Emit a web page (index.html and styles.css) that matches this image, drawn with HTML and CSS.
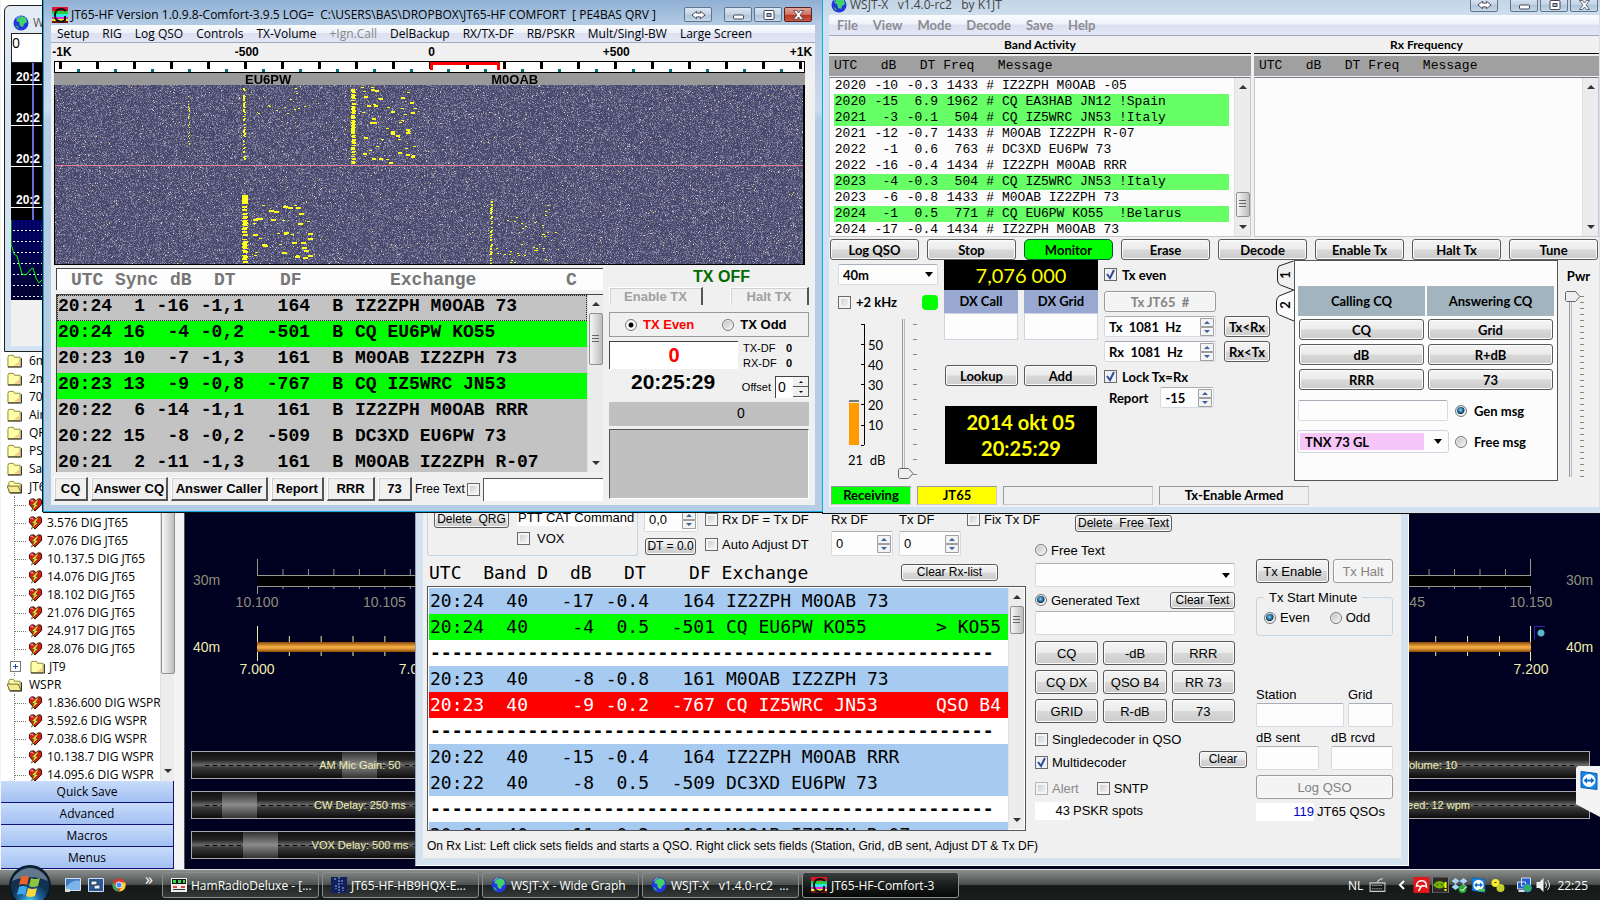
FILE: index.html
```html
<!DOCTYPE html>
<html lang="en">
<head>
    <meta charset="UTF-8">
    <meta name="viewport" content="width=device-width, initial-scale=1.0">
    <title>JT65-HF Comfort</title>
    <link rel="stylesheet" href="styles.css">
</head>
<body>
<svg class="defs" width="0" height="0">
    <symbol id="folder" viewBox="0 0 16 14">
        <path d="M1 3l1-2h5l1 2h6v10H1z" fill="#ffffa8" stroke="#8a8430"/>
        <path d="M14 7v5H7z" fill="#f5c98e"/>
        <path d="M1 13.500h14.500V4" fill="none" stroke="#222"/>
    </symbol>
    <symbol id="folder-open" viewBox="0 0 16 14">
        <path d="M2 12V2l1-1h4l1 2h6v9z" fill="#ffffa8" stroke="#8a8430"/>
        <path d="M0 6h12l3 7H3z" fill="#f4eb93" stroke="#6d6820"/>
        <path d="M3 13.500h12.500V4" fill="none" stroke="#222"/>
    </symbol>
    <symbol id="heart" viewBox="0 0 15 15">
        <path d="M7 14L1 7V3l2-2h3l2 2 2-2h3l1 2v4z" fill="#e31818" stroke="#200"/>
        <path d="M2 3l2-1 1 2" stroke="#fbb" fill="none"/>
        <path d="M9 2L3 8h3l-3 6 8-7H8l3-5z" fill="#e8d43c" stroke="#4b4300" stroke-width=".7"/>
    </symbol>
    <symbol id="globe" viewBox="0 0 16 16">
        <circle cx="8" cy="8" r="7.500" fill="#2334e0"/>
        <path d="M5 3l4-2 4 2 1 4-3 2-1 3-3-1-1-4-3-1z" fill="#3fd36a"/>
        <path d="M2 10l3 1 1 3-2-1z" fill="#2fae52"/>
        <path d="M3 4a7 7 0 0 1 4-3" stroke="#9bb8ff" fill="none"/>
    </symbol>
    <symbol id="comfort" viewBox="0 0 16 16">
        <path d="M0 0h16v4H0z" fill="#e3122a"/>
        <path d="M0 4h16v3H0z" fill="#27d03c"/>
        <path d="M0 7h16v3H0z" fill="#2fe6ef"/>
        <path d="M0 10h16v2H0z" fill="#f02bd7"/>
        <path d="M0 12h16v2H0z" fill="#f4e92c"/>
        <path d="M0 14h16v2H0z" fill="#7b1010"/>
        <path d="M14 4c-3-3-11-3-11 4s7 8 10 5V9" fill="none" stroke="#111" stroke-width="2"/>
    </symbol>
    <symbol id="teamviewer" viewBox="0 0 18 20">
        <path d="M1 1l16 2v16L1 17z" fill="#1587e8" stroke="#0a5cb0"/>
        <circle cx="9" cy="10" r="6.500" fill="#fff"/>
        <path d="M3.500 10l3.500-3v2h4V7l3.500 3-3.500 3v-2H7v2z" fill="#0d6ccb"/>
    </symbol>
    <symbol id="arrows" viewBox="0 0 16 10">
        <path d="M1 5l5-4v2h4V1l5 4-5 4V7H6v2z" fill="#fff" stroke="#445"/>
    </symbol>
    <symbol id="min" viewBox="0 0 12 10"><rect x="1" y="5" width="10" height="4" rx="1" fill="#fff" stroke="#445"/></symbol>
    <symbol id="max" viewBox="0 0 12 10">
        <rect x="1.500" y=".5" width="10" height="9" rx="1" fill="#fff" stroke="#445"/><rect x="4.500" y="3.500" width="4" height="3" fill="#9db4d0" stroke="#445"/>
    </symbol>
    <symbol id="close" viewBox="0 0 12 10">
        <path d="M1 .5h3L6 3l2-2.500h3L7.500 5 11 9.500H8L6 7 4 9.500H1L4.500 5z" fill="#fff" stroke="#445" stroke-width=".8"/>
    </symbol>
</svg>

<div class="desktop">

    <!-- Ham Radio Deluxe, behind everything -->
    <main class="hrd">
        <aside class="side">
            <ul class="tree">
                <li><svg><use href="#folder"/></svg>6m</li>
                <li><svg><use href="#folder"/></svg>2m</li>
                <li><svg><use href="#folder"/></svg>70</li>
                <li><svg><use href="#folder"/></svg>Air</li>
                <li><svg><use href="#folder"/></svg>QRP</li>
                <li><svg><use href="#folder"/></svg>PSK</li>
                <li><svg><use href="#folder"/></svg>Sat</li>
                <li><svg><use href="#folder-open"/></svg>JT65
                    <ul>
                        <li><svg><use href="#heart"/></svg>1.838 DIG JT65</li>
                        <li><svg><use href="#heart"/></svg>3.576 DIG JT65</li>
                        <li><svg><use href="#heart"/></svg>7.076 DIG JT65</li>
                        <li><svg><use href="#heart"/></svg>10.137.5 DIG JT65</li>
                        <li><svg><use href="#heart"/></svg>14.076 DIG JT65</li>
                        <li><svg><use href="#heart"/></svg>18.102 DIG JT65</li>
                        <li><svg><use href="#heart"/></svg>21.076 DIG JT65</li>
                        <li><svg><use href="#heart"/></svg>24.917 DIG JT65</li>
                        <li><svg><use href="#heart"/></svg>28.076 DIG JT65</li>
                        <li class="plus"><svg><use href="#folder"/></svg>JT9</li>
                    </ul>
                </li>
                <li><svg><use href="#folder-open"/></svg>WSPR
                    <ul>
                        <li><svg><use href="#heart"/></svg>1.836.600 DIG WSPR</li>
                        <li><svg><use href="#heart"/></svg>3.592.6 DIG WSPR</li>
                        <li><svg><use href="#heart"/></svg>7.038.6 DIG WSPR</li>
                        <li><svg><use href="#heart"/></svg>10.138.7 DIG WSPR</li>
                        <li><svg><use href="#heart"/></svg>14.095.6 DIG WSPR</li>
                    </ul>
                </li>
            </ul>
            <div class="sbar side-bar"><i class="thumb"></i><i class="dn"></i></div>
            <div class="side-btns">
                <button>Quick Save</button>
                <button>Advanced</button>
                <button>Macros</button>
                <button>Menus</button>
            </div>
        </aside>
        <section class="radio">
            <div class="band b30">
                <b>30m</b>
                <div class="dial">
                    <div class="ticks"></div>
                    <div class="marks"><span>10.100</span><span>10.105</span><span>10.110</span><span>10.115</span><span>10.120</span><span>10.125</span><span>10.130</span><span>10.135</span><span>10.140</span><span>10.145</span><span>10.150</span></div>
                </div>
                <b>30m</b>
            </div>
            <div class="band b40">
                <b>40m</b>
                <div class="dial">
                    <div class="ticks"></div>
                    <i class="flag"></i>
                    <div class="marks"><span>7.000</span><span>7.025</span><span>7.050</span><span>7.075</span><span>7.100</span><span>7.125</span><span>7.150</span><span>7.175</span><span>7.200</span></div>
                </div>
                <b>40m</b>
            </div>
            <div class="sliders">
                <label><input type="range" value="50"><span>AM Mic Gain: 50</span></label>
                <label class="last"><input type="range" value="10"><span>AF Volume: 10</span></label>
                <label><input type="range" value="10"><span>CW Delay: 250 ms</span></label>
                <label class="last"><input type="range" value="12"><span>CW Speed: 12 wpm</span></label>
                <label><input type="range" value="17"><span>VOX Delay: 500 ms</span></label>
            </div>
        </section>
    </main>

    <!-- WSJT-X wide graph -->
    <section class="win wide">
        <header><svg><use href="#globe"/></svg>W</header>
        <div class="wide-body">
            <p class="wide-box">0</p>
            <div class="wide-fall"><b>20:2</b><b>20:2</b><b>20:2</b><b>20:2</b></div>
            <svg class="wide-plot" viewBox="0 0 32 80"><path d="M0 0v24l3 10 3 2 5 18 4 1 5-6 2-1 3 10 3 5 4-4" fill="none" stroke="#0f0"/></svg>
        </div>
    </section>

    <!-- JT65-HF HB9HQX edition -->
    <section class="win hb9">
        <div class="hb9-body">
            <div class="hb9-top">
                <div class="ptt">
                    <button class="btn small">Delete&nbsp; QRG</button>
                    <div><p>PTT CAT Command</p><label><input type="checkbox">VOX</label></div>
                </div>
                <div class="dt"><input class="spin" value="0,0" aria-label="DT"><button class="btn small">DT = 0.0</button></div>
                <div class="adj">
                    <label><input type="checkbox">Rx DF = Tx DF</label>
                    <label><input type="checkbox">Auto Adjust DT</label>
                </div>
                <label class="df">Rx DF<input class="spin" value="0"></label>
                <label class="df">Tx DF<input class="spin" value="0"></label>
                <label class="fix"><input type="checkbox">Fix Tx DF</label>
                <button class="btn small del">Delete&nbsp; Free Text</button>
            </div>
            <div class="hb9-main">
                <div class="hb9-left">
                    <div class="rx-head"><pre>UTC  Band D  dB   DT    DF Exchange</pre><button class="btn small">Clear Rx-list</button></div>
                    <div class="rx-list">
                        <table>
                            <tr><td>20:24</td><td>40</td><td>-17</td><td>-0.4</td><td>164</td><td>IZ2ZPH M0OAB 73</td><td></td></tr>
                            <tr class="green"><td>20:24</td><td>40</td><td>-4</td><td>0.5</td><td>-501</td><td>CQ EU6PW KO55</td><td>&gt; KO55</td></tr>
                            <tr class="line"><td colspan="7">----------------------------------------------------</td></tr>
                            <tr><td>20:23</td><td>40</td><td>-8</td><td>-0.8</td><td>161</td><td>M0OAB IZ2ZPH 73</td><td></td></tr>
                            <tr class="red"><td>20:23</td><td>40</td><td>-9</td><td>-0.2</td><td>-767</td><td>CQ IZ5WRC JN53</td><td>QSO B4</td></tr>
                            <tr class="line"><td colspan="7">----------------------------------------------------</td></tr>
                            <tr><td>20:22</td><td>40</td><td>-15</td><td>-0.4</td><td>164</td><td>IZ2ZPH M0OAB RRR</td><td></td></tr>
                            <tr><td>20:22</td><td>40</td><td>-8</td><td>0.5</td><td>-509</td><td>DC3XD EU6PW 73</td><td></td></tr>
                            <tr class="line"><td colspan="7">----------------------------------------------------</td></tr>
                            <tr><td>20:21</td><td>40</td><td>-11</td><td>-0.3</td><td>161</td><td>M0OAB IZ2ZPH R-07</td><td></td></tr>
                        </table>
                        <div class="sbar"><i class="up"></i><i class="thumb"></i><i class="dn"></i></div>
                    </div>
                    <p class="hint">On Rx List: Left click sets fields and starts a QSO. Right click sets fields (Station, Grid, dB sent, Adjust DT &amp; Tx DF)</p>
                </div>
                <div class="hb9-mid">
                    <label><input type="radio" name="txt">Free Text</label>
                    <select aria-label="Free Text"><option></option></select>
                    <div class="gen"><label><input type="radio" name="txt" checked>Generated Text</label><button class="btn small">Clear Text</button></div>
                    <input class="box" aria-label="Generated Text">
                    <div class="keys">
                        <button class="btn">CQ</button><button class="btn">-dB</button><button class="btn">RRR</button>
                        <button class="btn">CQ DX</button><button class="btn">QSO B4</button><button class="btn">RR 73</button>
                        <button class="btn">GRID</button><button class="btn">R-dB</button><button class="btn">73</button>
                    </div>
                    <label><input type="checkbox">Singledecoder in QSO</label>
                    <div class="multi"><label><input type="checkbox" checked>Multidecoder</label><button class="btn small">Clear</button></div>
                    <div class="alert"><label class="off"><input type="checkbox" disabled>Alert</label><label><input type="checkbox">SNTP</label></div>
                    <p class="count"><span>43</span>PSKR spots</p>
                </div>
                <div class="hb9-right">
                    <div class="pair tx"><button class="btn">Tx Enable</button><button class="btn" disabled>Tx Halt</button></div>
                    <fieldset>
                        <legend>Tx Start Minute</legend>
                        <label><input type="radio" name="min" checked>Even</label>
                        <label><input type="radio" name="min">Odd</label>
                    </fieldset>
                    <div class="pair st"><label>Station<input class="box"></label><label>Grid<input class="box"></label></div>
                    <div class="pair db"><label>dB sent<input class="box"></label><label>dB rcvd<input class="box"></label></div>
                    <button class="btn" disabled>Log QSO</button>
                    <p class="count qsos"><span>119</span>JT65 QSOs</p>
                </div>
            </div>
        </div>
    </section>

    <!-- WSJT-X main window -->
    <section class="win wsjt">
        <header>
            <svg><use href="#globe"/></svg><h2>WSJT-X &nbsp; v1.4.0-rc2 &nbsp; by K1JT</h2>
            <div class="caps"><button aria-label="Move"><svg><use href="#arrows"/></svg></button><button aria-label="Minimize"><svg><use href="#min"/></svg></button><button aria-label="Maximize"><svg><use href="#max"/></svg></button><button aria-label="Close"><svg><use href="#close"/></svg></button></div>
        </header>
        <div class="wsjt-body">
            <nav class="menu"><a href="#">File</a><a href="#">View</a><a href="#">Mode</a><a href="#">Decode</a><a href="#">Save</a><a href="#">Help</a></nav>
            <div class="panes">
                <div class="pane">
                    <h3>Band Activity</h3>
                    <pre>UTC   dB   DT Freq   Message</pre>
                    <div class="log">
                        <table>
                            <tr><td>2020</td><td>-10</td><td>-0.3</td><td>1433</td><td>#</td><td>IZ2ZPH M0OAB -05</td></tr>
                            <tr class="cq"><td>2020</td><td>-15</td><td>6.9</td><td>1962</td><td>#</td><td>CQ EA3HAB JN12 !Spain</td></tr>
                            <tr class="cq"><td>2021</td><td>-3</td><td>-0.1</td><td>504</td><td>#</td><td>CQ IZ5WRC JN53 !Italy</td></tr>
                            <tr><td>2021</td><td>-12</td><td>-0.7</td><td>1433</td><td>#</td><td>M0OAB IZ2ZPH R-07</td></tr>
                            <tr><td>2022</td><td>-1</td><td>0.6</td><td>763</td><td>#</td><td>DC3XD EU6PW 73</td></tr>
                            <tr><td>2022</td><td>-16</td><td>-0.4</td><td>1434</td><td>#</td><td>IZ2ZPH M0OAB RRR</td></tr>
                            <tr class="cq"><td>2023</td><td>-4</td><td>-0.3</td><td>504</td><td>#</td><td>CQ IZ5WRC JN53 !Italy</td></tr>
                            <tr><td>2023</td><td>-6</td><td>-0.8</td><td>1433</td><td>#</td><td>M0OAB IZ2ZPH 73</td></tr>
                            <tr class="cq"><td>2024</td><td>-1</td><td>0.5</td><td>771</td><td>#</td><td>CQ EU6PW KO55  !Belarus</td></tr>
                            <tr><td>2024</td><td>-17</td><td>-0.4</td><td>1434</td><td>#</td><td>IZ2ZPH M0OAB 73</td></tr>
                        </table>
                        <div class="sbar low"><i class="up"></i><i class="thumb"></i><i class="dn"></i></div>
                    </div>
                </div>
                <div class="pane">
                    <h3>Rx Frequency</h3>
                    <pre>UTC   dB   DT Freq   Message</pre>
                    <div class="log"><div class="sbar"><i class="up"></i><i class="dn"></i></div></div>
                </div>
            </div>
            <div class="row8">
                <button class="btn">Log QSO</button><button class="btn">Stop</button><button class="btn on">Monitor</button><button class="btn">Erase</button>
                <button class="btn">Decode</button><button class="btn">Enable Tx</button><button class="btn">Halt Tx</button><button class="btn">Tune</button>
            </div>
            <div class="ctl">
                <div class="c-band">
                    <select aria-label="Band"><option>40m</option></select>
                    <div class="khz"><label><input type="checkbox">+2 kHz</label><i></i></div>
                    <div class="meters">
                        <div>
                            <svg class="meter" viewBox="0 0 50 124"><path d="M11 79h10" stroke="#000"/><path d="M11 81h10v42H11z" fill="#ff9a00"/><path d="M27.500 2v121M24 2.500h3M24 123.500h3M24 22.500h3M24 42.500h3M24 62.500h3M24 82.500h3M24 103.500h3" transform="translate(-1)" stroke="#000"/></svg>
                            <ol><li>50</li><li>40</li><li>30</li><li>20</li><li>10</li></ol>
                            <p>21&nbsp; dB</p>
                        </div>
                        <input class="vert gain" type="range" value="0" aria-label="Gain">
                    </div>
                </div>
                <div class="c-dx">
                    <output>7,076 000</output>
                    <div class="two"><label>DX Call<input></label><label>DX Grid<input></label></div>
                    <div class="two look"><button class="btn">Lookup</button><button class="btn">Add</button></div>
                    <p class="date">2014 okt 05<br>20:25:29</p>
                </div>
                <div class="c-tx">
                    <label><input type="checkbox" checked>Tx even</label>
                    <button class="btn mode" disabled>Tx JT65&nbsp; #</button>
                    <div><input class="spin" value="Tx  1081  Hz" aria-label="Tx frequency"><button class="btn">Tx&lt;Rx</button></div>
                    <div><input class="spin" value="Rx  1081  Hz" aria-label="Rx frequency"><button class="btn">Rx&lt;Tx</button></div>
                    <label><input type="checkbox" checked>Lock Tx=Rx</label>
                    <label class="rep">Report<input class="spin" value="-15"></label>
                </div>
                <div class="tabs">
                    <svg viewBox="0 0 18 64"><path d="M17.500 1L3 6Q1.500 8 1.500 12v8q0 4 3 5l13 5" fill="#f0f0f0" stroke="#222"/><path d="M18 30L3 36Q.5 38 .5 42v8q0 4 3 5L18 61" fill="#fcfcfc" stroke="#222"/></svg>
                    <span>1</span><span>2</span>
                </div>
                <div class="c-msg">
                    <div class="msg">
                        <h4>Calling CQ</h4><h4>Answering CQ</h4>
                        <button class="btn">CQ</button><button class="btn">Grid</button>
                        <button class="btn">dB</button><button class="btn">R+dB</button>
                        <button class="btn">RRR</button><button class="btn">73</button>
                    </div>
                    <div class="line"><input class="box" aria-label="Generated message"><label><input type="radio" name="msg" checked>Gen msg</label></div>
                    <div class="line"><select class="pink" aria-label="Free message"><option>TNX 73 GL</option></select><label><input type="radio" name="msg">Free msg</label></div>
                </div>
                <label class="pwr">Pwr<input class="vert" type="range" value="100"></label>
            </div>
            <footer class="status"><span class="rx">Receiving</span><span class="jt">JT65</span><span></span><span>Tx-Enable Armed</span></footer>
        </div>
    </section>

    <!-- JT65-HF Comfort -->
    <section class="win comfort">
        <header>
            <svg><use href="#comfort"/></svg><h2>JT65-HF Version 1.0.9.8-Comfort-3.9.5 LOG=&nbsp; C:\USERS\BAS\DROPBOX\JT65-HF COMFORT&nbsp; [ PE4BAS QRV ]</h2>
            <div class="caps"><button aria-label="Move"><svg><use href="#arrows"/></svg></button><button aria-label="Minimize"><svg><use href="#min"/></svg></button><button aria-label="Maximize"><svg><use href="#max"/></svg></button><button class="x" aria-label="Close"><svg><use href="#close"/></svg></button></div>
        </header>
        <div class="comfort-body">
            <nav class="menu"><a href="#">Setup</a><a href="#">RIG</a><a href="#">Log QSO</a><a href="#">Controls</a><a href="#">TX-Volume</a><a href="#" class="off">+Ign.Call</a><a href="#">DelBackup</a><a href="#">RX/TX-DF</a><a href="#">RB/PSKR</a><a href="#">Mult/Singl-BW</a><a href="#">Large Screen</a></nav>
            <div class="scale"><span>-1K</span><span>-500</span><span>0</span><span>+500</span><span>+1K</span></div>
            <div class="ruler"><i></i></div>
            <div class="calls"><span>EU6PW</span><span>M0OAB</span></div>
            <canvas id="fall" width="748" height="179"></canvas>
            <div class="cf">
                <div class="cf-left">
                    <div class="cf-head"><span>UTC</span><span>Sync</span><span>dB</span><span>DT</span><span>DF</span><span>Exchange</span><span>C</span></div>
                    <div class="cf-list">
                        <table>
                            <tr class="sel"><td>20:24</td><td>1</td><td>-16</td><td>-1,1</td><td>164</td><td>B</td><td>IZ2ZPH M0OAB 73</td></tr>
                            <tr class="green"><td>20:24</td><td>16</td><td>-4</td><td>-0,2</td><td>-501</td><td>B</td><td>CQ EU6PW KO55</td></tr>
                            <tr><td>20:23</td><td>10</td><td>-7</td><td>-1,3</td><td>161</td><td>B</td><td>M0OAB IZ2ZPH 73</td></tr>
                            <tr class="green"><td>20:23</td><td>13</td><td>-9</td><td>-0,8</td><td>-767</td><td>B</td><td>CQ IZ5WRC JN53</td></tr>
                            <tr><td>20:22</td><td>6</td><td>-14</td><td>-1,1</td><td>161</td><td>B</td><td>IZ2ZPH M0OAB RRR</td></tr>
                            <tr><td>20:22</td><td>15</td><td>-8</td><td>-0,2</td><td>-509</td><td>B</td><td>DC3XD EU6PW 73</td></tr>
                            <tr><td>20:21</td><td>2</td><td>-11</td><td>-1,3</td><td>161</td><td>B</td><td>M0OAB IZ2ZPH R-07</td></tr>
                        </table>
                        <div class="sbar"><i class="up"></i><i class="thumb"></i><i class="dn"></i></div>
                    </div>
                    <div class="cf-keys">
                        <button>CQ</button><button>Answer CQ</button><button>Answer Caller</button><button>Report</button><button>RRR</button><button>73</button>
                        <label>Free Text<input type="checkbox"></label><input class="free" aria-label="Free Text">
                    </div>
                </div>
                <div class="cf-right">
                    <h3>TX OFF</h3>
                    <div class="cf-tx"><button disabled>Enable TX</button><button disabled>Halt TX</button></div>
                    <div class="cf-min"><label class="ev"><input type="radio" name="tx" checked>TX Even</label><label><input type="radio" name="tx">TX Odd</label></div>
                    <div class="cf-df"><input value="0" aria-label="Transmit text"><dl><dt>TX-DF</dt><dd>0</dd><dt>RX-DF</dt><dd>0</dd></dl></div>
                    <div class="cf-clock"><time>20:25:29</time><label>Offset<input value="0"></label></div>
                    <p class="cf-zero">0</p>
                    <div class="cf-gray"></div>
                </div>
            </div>
        </div>
    </section>

    <div class="tv"><svg><use href="#teamviewer"/></svg></div>
</div>

<footer class="taskbar">
    <button class="start" aria-label="Start"><svg viewBox="0 0 42 42">
        <defs><radialGradient id="orb" cy="90%"><stop offset="0" stop-color="#4fd8f5"/><stop offset=".5" stop-color="#1c6ba5"/><stop offset="1" stop-color="#12304f"/></radialGradient></defs>
        <circle cx="21" cy="21" r="20" fill="url(#orb)" stroke="#0a1b2b" stroke-width="2"/>
        <path d="M3 16a19 19 0 0 1 36 0q-18-8-36 0z" fill="#fff" opacity=".35"/>
        <path d="M12 12q5-2 8 0l-2 8q-4-2-8 0z" fill="#f0602a"/><path d="M22 13q4 2 9 0l-2 8q-5 2-9 0z" fill="#8cc63e"/>
        <path d="M10 22q4-2 8 0l-2 8q-4-2-8 0z" fill="#3fa9f0"/><path d="M19 23q5 2 9 0l-2 8q-5 2-9 0z" fill="#fcd53f"/>
    </svg></button>
    <div class="quick">
        <svg viewBox="0 0 16 14"><path d="M.5.5h15v12H.5z" fill="#3f79c4" stroke="#cfe0f2"/><path d="M1 9q7-8 14-6v9H1z" fill="#7db4e8"/><path d="M0 11h5v3H0z" fill="#ddd"/></svg>
        <svg viewBox="0 0 16 14"><path d="M.5.5h15v13H.5z" fill="#2b5797" stroke="#cfe0f2"/><path d="M3 3h6v4H3zM6 7h6v4H6z" fill="#eef" stroke="#245"/></svg>
        <svg viewBox="0 0 16 16"><circle cx="8" cy="8" r="7.500" fill="#e0372c"/><path d="M1.300 4.500L6 12l2 3.500A7.500 7.500 0 0 1 1.300 4.500z" fill="#35a452"/><path d="M15 5H8l3 5-3 5.500A7.500 7.500 0 0 0 15 5z" fill="#fbd03c"/><circle cx="8" cy="8" r="3.500" fill="#4a8af4" stroke="#fff"/></svg>
        <span>»</span>
    </div>
    <div class="tasks">
        <button><svg viewBox="0 0 16 14"><path d="M0 0h16v14H0z" fill="#eee"/><path d="M1 1h14v5H1z" fill="#111"/><path d="M2 2h3v3H2zM7 2h3v3H7zM12 2h2v3h-2z" fill="#2fe04a"/><path d="M2 8h4v2H2zM10 8h4v2h-4z" fill="#d44"/><path d="M2 11h12v1H2z" fill="#333"/></svg>HamRadioDeluxe - [...</button>
        <button><svg viewBox="0 0 16 16"><path d="M0 0h16v16H0z" fill="#12205c"/><path d="M8 0v16M4 1v3M5 8v4M11 3v4M12 10v4" stroke="#9cb7ff" stroke-dasharray="2 1"/></svg>JT65-HF-HB9HQX-E...</button>
        <button><svg><use href="#globe"/></svg>WSJT-X - Wide Graph</button>
        <button><svg><use href="#globe"/></svg>WSJT-X &nbsp; v1.4.0-rc2 &nbsp;...</button>
        <button class="active"><svg><use href="#comfort"/></svg>JT65-HF-Comfort-3</button>
    </div>
    <div class="tray">
        <span>NL</span>
        <svg viewBox="0 0 16 14"><path d="M1 5h14v8H1z" fill="none" stroke="#ccc"/><path d="M3 7.500h10M3 10.500h10" stroke="#ccc" stroke-dasharray="1 1"/><path d="M8 5q0-3 5-4" stroke="#ccc" fill="none"/></svg>
        <svg class="lt" viewBox="0 0 8 10"><path d="M6 1L2 5l4 4" stroke="#fff" stroke-width="2" fill="none"/></svg>
        <svg viewBox="0 0 16 16"><path d="M0 0h16v16H0z" fill="#e3161c"/><path d="M3 9q0-6 7-5 3 1 3 6-2-2-3-1-2-1-3 1-2-2-4-1zM8 9l-3 5" fill="none" stroke="#fff" stroke-width="1.500"/></svg>
        <svg viewBox="0 0 16 16"><path d="M0 0h16v16H0z" fill="#2a2a2a" stroke="#777"/><path d="M2 8q5-6 10 0-5 5-10 0z" fill="none" stroke="#76b900" stroke-width="2"/><circle cx="7" cy="8" r="2" fill="#76b900"/><path d="M13 5v6M13 12v2" stroke="#ff0" stroke-width="2"/></svg>
        <svg viewBox="0 0 16 16"><path d="M4 1l4 3-4 3-4-3zM12 1l4 3-4 3-4-3zM4 7l4 3-4 3-4-3zM12 7l4 3-4 3-4-3z" fill="#a9d4f7"/><circle cx="11" cy="12" r="4" fill="#2ba83a"/><path d="M9 12l2 2 3-4" stroke="#fff" fill="none"/></svg>
        <svg viewBox="0 0 18 20"><use href="#teamviewer"/><path d="M9 15h8v3H9z" fill="#4fd04a"/></svg>
        <svg viewBox="0 0 16 16"><circle cx="6" cy="6" r="4" fill="#f6ee2c"/><circle cx="11" cy="11" r="4" fill="#bfd22b"/><path d="M5 5h2v1H5z" fill="#333"/></svg>
        <svg class="net" viewBox="0 0 16 16"><path d="M5 1h9v8H5zM1 5h8v7H1z" fill="#1d5fd0" stroke="#dde"/><circle cx="11" cy="11" r="4" fill="#36b05a" stroke="#28d"/><path d="M2 14h6" stroke="#dde" stroke-width="2"/></svg>
        <svg viewBox="0 0 16 16"><path d="M1 5h3l4-4v14l-4-4H1z" fill="#eee"/><path d="M10 5q2 3 0 6M12 3q4 5 0 10" stroke="#eee" fill="none"/></svg>
        <time>22:25</time>
    </div>
</footer>

<script>
    // waterfall: fixed seed so it looks the same on every load
    let seed = 65;
    function rnd() {
        seed = (seed * 1664525 + 1013904223) % 4294967296;
        return seed / 4294967296;
    }

    const canvas = document.getElementById('fall');
    const ctx = canvas.getContext('2d');
    const img = ctx.createImageData(canvas.width, canvas.height);
    for (let i = 0; i < img.data.length; i += 4) {
        const v = Math.pow(rnd(), 3) * 80;
        let c = [70 + v, 70 + v, 108 + v * 0.8];
        const r = rnd();
        if (r > 0.998) c = [240, 235, 110];
        else if (r > 0.99) c = [205, 205, 215];
        img.data.set([c[0], c[1], c[2], 255], i);
    }
    ctx.putImageData(img, 0, 0);

    // steady tone: x, width, top, bottom, density
    function tone(x, w, top, bottom, density) {
        for (let y = top; y < bottom; y++) {
            if (rnd() < density) ctx.fillRect(x + Math.floor(rnd() * 2), y, w, 1);
        }
    }

    // short data tones to the right of the sync tone
    function data(x, w, top, bottom, count, len) {
        for (let i = 0; i < count; i++) {
            ctx.fillRect(Math.floor(x + rnd() * w), Math.floor(top + rnd() * (bottom - top)), len, len > 3 ? 2 : 1);
        }
    }

    ctx.fillStyle = '#ffff1e';
    tone(133, 1, 3, 65, 0.4);
    tone(188, 2, 3, 76, 0.65);
    tone(296, 4, 3, 79, 0.85);
    data(304, 60, 2, 78, 26, 4);
    data(304, 60, 2, 78, 24, 3);
    data(200, 55, 2, 30, 12, 2);
    ctx.fillRect(187, 110, 6, 9);
    tone(187, 5, 121, 179, 0.8);
    data(198, 56, 118, 178, 24, 5);
    data(198, 56, 118, 178, 14, 3);
    tone(435, 2, 114, 179, 0.5);
    data(440, 62, 120, 178, 35, 2);
    ctx.fillStyle = '#e87f9a';
    ctx.fillRect(0, 80, 748, 1);
</script>
</body>
</html>
```
FILE: styles.css
```css
* {
    box-sizing: border-box;
}

body {
    margin: 0;
    height: 100vh;
    overflow: hidden;
    display: flex;
    flex-direction: column;
    font-family: "Open Sans", sans-serif;
    font-size: 12px;
    color: #000;
    background: #000;
}

h2, h3, h4, p, pre, ul, ol, dl, dd {
    margin: 0;
    padding: 0;
    list-style: none;
    font-weight: normal;
}

button, input, select {
    font: inherit;
    color: inherit;
    padding: 0;
    margin: 0;
}

a {
    color: inherit;
    text-decoration: none;
}

table {
    border-collapse: collapse;
}

td {
    padding: 0;
    white-space: pre;
}

.defs {
    position: absolute;
}

.desktop {
    position: relative;
    flex: 1;
    min-height: 0;
    overflow: hidden;
    background: #f0f0f0;
}

/* ---- shared controls ---- */

.btn {
    border: 1px solid #5a5a5a;
    border-radius: 3px;
    background: linear-gradient(#f4f4f4, #ebebeb 48%, #d8d8d8 52%, #cccccc);
    box-shadow: inset 0 0 0 1px #fbfbfb;
    height: 24px;
    white-space: nowrap;
}

.btn:disabled {
    color: #838383;
    border-color: #9a9a9a;
    background: #f4f4f4;
}

input[type="checkbox"] {
    appearance: none;
    flex: none;
    width: 13px;
    height: 13px;
    border: 1px solid #6a6a6a;
    background: linear-gradient(135deg, #c4c8cc, #fafafa);
    box-shadow: inset 0 0 0 2px #f4f4f4;
}

input[type="checkbox"]:checked {
    background: #eef0f5 url("data:image/svg+xml,%3Csvg xmlns='http://www.w3.org/2000/svg' viewBox='0 0 11 11'%3E%3Cpath d='M2 5l3 4 4-8' fill='none' stroke='%23304c94' stroke-width='2'/%3E%3C/svg%3E");
    box-shadow: none;
}

input[type="checkbox"]:disabled {
    border-color: #b5b5b5;
}

input[type="radio"] {
    appearance: none;
    flex: none;
    width: 12px;
    height: 12px;
    border: 1px solid #777;
    border-radius: 50%;
    background: linear-gradient(135deg, #bcbcbc, #fafafa);
    box-shadow: inset 0 0 0 1px #f4f4f4;
}

input[type="radio"]:checked {
    background: radial-gradient(circle at 45% 40%, #7fd4f5, #1b5f92 35%, #12324f 45%, #e8e8e8 55%);
}

label {
    display: flex;
    align-items: center;
    white-space: nowrap;
}

select, .box, .spin {
    appearance: none;
    border: 1px solid #d5dae3;
    border-top-color: #a9adb8;
    border-radius: 2px;
    background-color: #fdfdfd;
}

select {
    background-image: url("data:image/svg+xml,%3Csvg xmlns='http://www.w3.org/2000/svg' width='8' height='5'%3E%3Cpath d='M0 0h8L4 5z'/%3E%3C/svg%3E");
    background-repeat: no-repeat;
    background-position: right 4px center;
}

.spin {
    background-image: url("data:image/svg+xml,%3Csvg xmlns='http://www.w3.org/2000/svg' width='14' height='18'%3E%3Cpath d='M.5.500h13v8H.5zM.5 9.500h13v8H.5z' fill='%23f3f3f3' stroke='%23a0a0a0'/%3E%3Cpath d='M4 6h6L7 3zM4 12h6l-3 3z' fill='%233f5f9f'/%3E%3C/svg%3E");
    background-repeat: no-repeat;
    background-position: right 1px center;
    padding-left: 4px;
    white-space: pre;
}

.sbar {
    flex: none;
    width: 16px;
    display: flex;
    flex-direction: column;
    align-items: center;
    background: #ececec;
    border-left: 1px solid #e0e0e0;
}

.sbar .up, .sbar .dn {
    border: 4px solid transparent;
    border-top: 0;
    border-bottom: 4px solid #333;
    margin: 7px 0;
}

.sbar .dn {
    border-bottom: 0;
    border-top: 4px solid #333;
    margin-top: auto;
}

.sbar .thumb {
    width: 14px;
    height: 28px;
    border: 1px solid #909090;
    border-radius: 2px;
    background: repeating-linear-gradient(#666 0 1px, transparent 1px 3px) center / 7px 9px no-repeat, linear-gradient(90deg, #f6f6f6, #d4d4d4 60%, #bdbdbd);
}

.sbar.low .thumb {
    margin-top: auto;
    height: 25px;
}

.sbar.low .dn {
    margin-top: 8px;
}

/* ---- windows ---- */

.win {
    position: absolute;
    background: #d4e1ee;
}

.win header {
    display: flex;
    align-items: center;
}

.win header > svg {
    width: 16px;
    height: 16px;
    flex: none;
}

.win h2 {
    flex: 1;
    font-size: 12px;
    white-space: nowrap;
    padding-left: 3px;
}

.caps {
    display: flex;
    gap: 2px;
}

.caps button {
    width: 28px;
    height: 15px;
    border: 1px solid #62748c;
    border-radius: 2px;
    background: linear-gradient(#dbe7f4, #c3d3e4 50%, #abc2d8 52%, #c5d9ea);
    display: flex;
    align-items: center;
    justify-content: center;
}

.caps button:first-child {
    margin-right: 10px;
}

.caps svg {
    width: 15px;
    height: 10px;
}

.caps .x {
    background: linear-gradient(#e3a79d, #cd6f60 50%, #b53322 52%, #c9583f);
    border-color: #5d2020;
}

.menu {
    display: flex;
    align-items: center;
    height: 18px;
    background: linear-gradient(#fafcff, #eef1f9 45%, #dce1f2 50%, #e2e6f4);
    border-bottom: 1px solid #a3a8bd;
}

/* ---- ham radio deluxe ---- */

.hrd {
    height: 100%;
    display: flex;
}

.side {
    width: 185px;
    padding: 0 10px 0 1px;
    display: grid;
    grid-template-columns: 1fr 14px;
    grid-template-rows: 1fr auto;
    background: #f4f4f4;
    border-right: 1px solid #555;
}

.tree {
    min-width: 0;
    overflow: hidden;
    height: 781px;
    padding-top: 352px;
    line-height: 18px;
    font-size: 12px;
    white-space: nowrap;
    background: #fff;
    align-self: end;
}

.tree svg {
    width: 15px;
    height: 14px;
    margin: 0 7px 0 6px;
    vertical-align: -3px;
}

.tree ul {
    margin-left: 13px;
    border-left: 1px dotted #777;
}

.tree ul li::before {
    content: "";
    display: inline-block;
    width: 11px;
    border-top: 1px dotted #777;
    vertical-align: 3px;
}

.tree ul li svg {
    margin: 0 4px 0 2px;
}

.tree .plus::before {
    width: 9px;
    height: 9px;
    margin: 0 7px 0 -5px;
    border: 1px solid #777;
    background: linear-gradient(#24a, #24a) center / 5px 1px no-repeat, linear-gradient(#24a, #24a) center / 1px 5px no-repeat, #fff;
    vertical-align: -1px;
}

.side-bar {
    width: 14px;
}

.side-bar .thumb {
    height: 674px;
    background: linear-gradient(90deg, #f6f6f6, #d4d4d4 60%, #bdbdbd);
}

.side-bar .dn {
    margin-bottom: 8px;
}

.side-btns {
    grid-column: span 2;
}

.side-btns button {
    display: block;
    width: 100%;
    height: 22px;
    border: 0;
    border-bottom: 1px solid #10107a;
    border-right: 1px solid #10107a;
    background: linear-gradient(#c8dcfb, #a3c0f2);
}

.radio {
    flex: 1;
    min-width: 0;
    background: #000020;
    padding: 559px 4px 0 6px;
    font-family: "Liberation Sans", sans-serif;
    font-size: 14px;
}

.band {
    display: flex;
    height: 67px;
    color: #8f8f7c;
}

.band b {
    width: 66px;
    font-weight: normal;
    padding: 13px 0 0 2px;
}

.band b:last-child {
    width: 65px;
    padding-left: 35px;
}

.b40 {
    color: #eeeeb0;
}

.dial {
    flex: 1;
    position: relative;
}

.dial::before {
    content: "";
    display: block;
    height: 35px;
    border: solid #9a9a88;
    border-width: 0 1px;
}

.dial .ticks {
    position: absolute;
    left: 0;
    right: 0;
    top: 10px;
    height: 20px;
    display: flow-root;
    background: linear-gradient(#000020, #000020) 0 6px / 100% 9px no-repeat, linear-gradient(90deg, #9a9a88 1px, transparent 1px) 0 0 / 2% 100%;
}

.dial .ticks::after {
    content: "";
    display: block;
    margin-top: 6px;
    height: 10px;
    background: #000;
    border: solid #9a9a88;
    border-width: 1px 0;
}

.b40 .dial::before {
    border-color: #eeeeb0;
}

.b40 .ticks {
    background: linear-gradient(90deg, #eeeeb0 1px, transparent 1px) 0 0 / 2.5% 100%;
}

.b40 .ticks::after {
    border: 0;
    background: linear-gradient(#8a4a08, #f0a840 45%, #f0a840 60%, #8a4a08);
}

.marks {
    display: flex;
    justify-content: space-between;
    height: 18px;
}

.marks span {
    width: 0;
    display: flex;
    justify-content: center;
}

.flag {
    position: absolute;
    right: -14px;
    top: 0;
    width: 11px;
    height: 13px;
    border: solid #2a2ab8;
    border-width: 1px 0 0 1px;
    background: radial-gradient(circle at 6px 6px, #5cb6cf 3px, transparent 4px);
}

.sliders {
    display: grid;
    grid-template-columns: repeat(4, 1fr);
    gap: 12px 16px;
    margin: 58px 6px 0 0;
    font-size: 11px;
    color: #eeeeb0;
}

.sliders label {
    position: relative;
    height: 28px;
    grid-column: 1;
}

.sliders .last {
    grid-column: 4;
}

.sliders span {
    position: absolute;
    inset: 0;
    display: flex;
    align-items: center;
    justify-content: center;
    pointer-events: none;
}

.sliders input {
    appearance: none;
    width: 100%;
    height: 28px;
    border: 1px solid #aaa;
    background: repeating-linear-gradient(90deg, #000 0 4px, transparent 4px 8px) center / calc(100% - 26px) 1px no-repeat, linear-gradient(#111, #222 30%, #6a6a6a 50%, #3a3a3a 60%, #0c0c0c);
}

.sliders input::-webkit-slider-thumb {
    appearance: none;
    width: 35px;
    height: 26px;
    background: linear-gradient(#333, #8c8c8c 50%, #777 60%, #333);
}

/* ---- wide graph ---- */

.wide {
    left: 4px;
    top: 5px;
    width: 60px;
    height: 347px;
    border: 1px solid #222;
    border-radius: 6px 0 0 0;
    padding: 0 0 6px 6px;
    background: linear-gradient(#e4edf6, #d3e2f0 100px);
}

.wide header {
    height: 27px;
    gap: 4px;
    padding: 6px 0 0 2px;
    color: #555;
}

.wide-body {
    height: 313px;
    background: #f0f0f0;
}

.wide-box {
    height: 30px;
    border: 1px solid #222;
    background: #fff;
    font-size: 14px;
    line-height: 18px;
}

.wide-fall {
    height: 157px;
    background: linear-gradient(90deg, transparent 21px, #6a6ad8 21px 23px, transparent 23px), #000;
    color: #fff;
    font: bold 12px "Liberation Sans", sans-serif;
}

.wide-fall b {
    display: block;
    height: 41px;
    padding: 7px 0 0 5px;
}

.wide-fall b::after {
    content: "";
    display: block;
    margin-left: -5px;
    border-top: 1px solid #fff;
}

.wide-plot {
    display: block;
    width: 32px;
    height: 80px;
    background: repeating-linear-gradient(90deg, #00004a 0 2px, transparent 2px 4px), repeating-linear-gradient(transparent 0 10px, #eee 10px 11px), linear-gradient(#00008a, #000010);
}

/* ---- hb9hqx ---- */

.hb9 {
    left: 415px;
    right: 191px;
    top: 500px;
    border: 1px solid #8fa5bb;
    border-color: #8fa5bb #fff #fff #8fa5bb;
    padding: 0 7px 7px;
    font-family: "Liberation Sans", sans-serif;
    font-size: 13px;
}

.hb9-body {
    background: #f0f0f0;
    padding: 6px 8px 4px 4px;
    height: 357px;
}

.hb9 .small {
    height: 17px;
    font-size: 12px;
    line-height: 13px;
}

.hb9 label {
    gap: 4px;
}

.hb9-top {
    display: flex;
    align-items: flex-start;
    height: 49px;
}

.ptt {
    display: flex;
    gap: 8px;
    width: 211px;
    height: 49px;
    padding: 4px 0 0 6px;
    border: 1px solid #c5d5e2;
    border-top: 0;
    border-radius: 3px;
}

.ptt .btn {
    width: 75px;
}

.ptt p {
    width: 115px;
    height: 15px;
    line-height: 14px;
    padding-left: 1px;
    background: #fff;
    white-space: nowrap;
}

.ptt label {
    padding-top: 5px;
}

.hb9 .ptt label {
    gap: 7px;
}

.dt {
    width: 54px;
    margin-left: 6px;
}

.dt .spin {
    width: 54px;
    height: 25px;
    display: block;
}

.dt .btn {
    margin: 6px 0 0 1px;
    width: 51px;
}

.adj {
    margin-left: 7px;
    width: 126px;
}

.adj label {
    height: 25px;
}

.hb9 .df {
    flex-direction: column;
    align-items: flex-start;
    width: 62px;
    margin-right: 6px;
    padding-top: 5px;
}

.df .spin {
    width: 62px;
    height: 25px;
}

.fix {
    height: 25px;
}

.del {
    margin: 8px 0 0 35px;
    width: 97px;
}

.hb9-main {
    display: grid;
    grid-template-columns: minmax(0, 1fr) 212px 137px;
    gap: 9px;
}

.rx-head {
    display: flex;
    justify-content: space-between;
    align-items: center;
    height: 30px;
    padding: 3px 28px 0 2px;
}

.rx-head pre, .rx-list table {
    font: 18px "DejaVu Sans Mono", monospace;
}

.rx-head .btn {
    width: 97px;
}

.rx-list {
    display: flex;
    height: 245px;
    overflow: hidden;
    border: 1px solid #555;
    background: #fff;
    padding: 1px;
}

.rx-list table {
    flex: 1;
    min-width: 0;
    table-layout: fixed;
    width: 100%;
    align-self: flex-start;
}

.rx-list tr {
    background: #a6caf0;
}

.rx-list tr.green {
    background: #0f0;
}

.rx-list tr.red {
    background: #f00;
    color: #fff;
}

.rx-list tr.line {
    background: #fff;
    font-weight: bold;
}

.rx-list td {
    height: 26px;
    width: 66px;
    line-height: 26px;
    padding-left: 1px;
}

.rx-list td:nth-child(2) {
    width: 33px;
    text-align: right;
}

.rx-list td:nth-child(3) {
    width: 66px;
    text-align: right;
}

.rx-list td:nth-child(4) {
    width: 55px;
    text-align: right;
}

.rx-list td:nth-child(5) {
    width: 66px;
    text-align: right;
}

.rx-list td:nth-child(6) {
    width: 190px;
    padding-left: 11px;
}

.rx-list td:nth-child(7) {
    width: auto;
    text-align: right;
    padding-right: 7px;
}

.hint {
    padding-top: 8px;
    font-size: 12px;
    white-space: nowrap;
}

.hb9-mid {
    margin-top: -14px;
    display: flex;
    flex-direction: column;
    align-items: flex-start;
}

.hb9-mid > label {
    height: 16px;
}

.hb9-mid select, .hb9-mid .box {
    width: 200px;
    height: 24px;
}

.hb9-mid select {
    margin-top: 5px;
}

.gen {
    display: flex;
    justify-content: space-between;
    width: 200px;
    height: 24px;
    padding-top: 2px;
    align-items: center;
}

.gen .btn {
    width: 65px;
}

.keys {
    display: grid;
    grid-template-columns: repeat(3, 1fr);
    gap: 5px;
    width: 200px;
    margin: 6px 0 8px;
}

.multi {
    display: flex;
    justify-content: space-between;
    align-items: center;
    width: 100%;
    height: 31px;
}

.multi .btn {
    width: 48px;
    margin-bottom: 6px;
}

.alert {
    display: flex;
    gap: 18px;
    height: 20px;
}

.off {
    color: #888;
}

.count {
    display: flex;
    height: 18px;
    line-height: 18px;
    margin-top: 4px;
    gap: 3px;
}

.count span {
    background: #fff;
    width: 35px;
    text-align: right;
}

.qsos span {
    width: 58px;
    color: #00c;
}

.hb9-right {
    display: flex;
    flex-direction: column;
    padding-top: 3px;
}

.pair {
    display: grid;
    grid-template-columns: 73px 1fr;
    gap: 4px;
}

.pair label {
    flex-direction: column;
    align-items: stretch;
    line-height: 16px;
}

.hb9 .pair label {
    gap: 0;
}

.pair .box {
    width: 100%;
    height: 24px;
}

.hb9-right fieldset {
    margin: 7px 0 0;
    height: 46px;
    padding: 5px 7px 0;
    border: 1px solid #c5d5e2;
    border-radius: 3px;
    display: flex;
    gap: 20px;
    align-items: flex-start;
}

.hb9-right legend {
    padding: 0 5px;
    margin-left: 0;
}

.pair.st {
    grid-template-columns: 88px 1fr;
    margin-top: 51px;
}

.pair.db {
    grid-template-columns: 63px 62px;
    justify-content: space-between;
    margin: 3px 0 5px;
}

.hb9-right .count {
    margin-top: 4px;
}

/* ---- wsjt-x ---- */

.wsjt {
    left: calc(48.75% + 42px);
    right: 0;
    top: -8px;
    padding: 0 1px 6px 6px;
    border: 1px solid #111;
    border-width: 0 0 1px 1px;
    font-family: Lato, sans-serif;
    font-size: 13px;
    font-weight: bold;
    background: linear-gradient(#bccfe2, #d3e2f0 30px);
}

.wsjt header {
    height: 23px;
    padding: 2px 1px 0 2px;
    font-family: "Open Sans", sans-serif;
}

.wsjt h2 {
    color: #444;
}

.wsjt-body {
    background: #f0f0f0;
}

.wsjt .menu {
    height: 21px;
    gap: 15px;
    padding-left: 8px;
    color: #8c8c90;
}

.panes {
    display: grid;
    grid-template-columns: 422px 1fr;
    gap: 3px;
}

.pane h3 {
    height: 18px;
    line-height: 17px;
    text-align: center;
    border-bottom: 1px solid #000;
    font-size: 12px;
    font-weight: bold;
}

.pane pre {
    margin-top: 2px;
    height: 20px;
    padding-left: 5px;
    background: #a0a0a0;
    font: 13px/20px "Liberation Mono", monospace;
}

.log {
    display: flex;
    height: 160px;
    margin-top: 1px;
    border: 1px solid #c8c8d0;
    border-top-color: #77778a;
    background: #fcfcfc;
}

.log table {
    flex: 1;
    margin: 0 5px 0 4px;
    font: 13px "Liberation Mono", monospace;
}

.log .sbar {
    margin-left: auto;
}

.log td {
    height: 16px;
    line-height: 16px;
    text-align: right;
    width: 32px;
}

.log td:nth-child(3) {
    width: 40px;
}

.log td:nth-child(4) {
    width: 40px;
}

.log td:nth-child(5) {
    width: 16px;
}

.log td:last-child {
    width: auto;
    text-align: left;
    padding-left: 8px;
}

.cq {
    background: #66ff66;
}

.row8 {
    display: grid;
    grid-template-columns: repeat(8, 1fr);
    gap: 8px;
    padding: 2px 1px 0;
}

.wsjt .btn {
    height: 21px;
}

.wsjt .on {
    background: #0f0;
    border-color: #053;
    border-radius: 5px;
    box-shadow: none;
}

.ctl {
    display: flex;
    height: 225px;
    padding-left: 9px;
}

.c-band {
    width: 100px;
    padding-top: 4px;
}

.c-band select {
    width: 100px;
    height: 21px;
    padding-left: 4px;
}

.khz {
    display: flex;
    justify-content: space-between;
    align-items: center;
    height: 34px;
}

.wsjt label {
    gap: 5px;
}

.khz i {
    width: 16px;
    height: 15px;
    border-radius: 4px;
    background: #0f0;
}

.meters {
    display: grid;
    grid-template-columns: 57px 30px;
}

.meters div {
    position: relative;
    padding-top: 3px;
}

.meter {
    display: block;
    width: 50px;
    height: 124px;
}

.meters ol {
    position: absolute;
    left: 30px;
    top: 16px;
    line-height: 20px;
}

.meters p {
    padding: 6px 0 0 10px;
}

.vert {
    appearance: none;
    writing-mode: vertical-lr;
    direction: rtl;
    width: 22px;
    height: 160px;
    background: linear-gradient(#999, #999) 7px 0 / 1px 100% no-repeat, linear-gradient(#bbb, #bbb) 9px 0 / 1px 100% no-repeat, repeating-linear-gradient(transparent 0 5px, #8a8a70 5px 6px, transparent 6px 15px) right 0 / 4px 100% no-repeat;
}

.vert::-webkit-slider-thumb {
    appearance: none;
    width: 16px;
    height: 11px;
    background: url("data:image/svg+xml,%3Csvg xmlns='http://www.w3.org/2000/svg' width='16' height='11'%3E%3Cpath d='M1.500.500h9l4.500 5-4.500 5h-9l-1-1v-8z' fill='%23eee' stroke='%23666'/%3E%3C/svg%3E") no-repeat;
}

.c-dx {
    width: 154px;
    margin-left: 6px;
}

.c-dx output {
    display: block;
    height: 30px;
    line-height: 30px;
    text-align: center;
    background: #000;
    color: #ff0;
    font-size: 20px;
    font-weight: normal;
}

.two {
    display: grid;
    grid-template-columns: 1fr 1fr;
    gap: 6px;
}

.wsjt .two label {
    flex-direction: column;
    gap: 0;
    background: #98a8d0;
    line-height: 23px;
}

.two label input {
    width: 100%;
    height: 27px;
    border: 1px solid #d0d4e0;
    background: #fdfdfd;
}

.look {
    margin: 25px 0 20px;
    padding: 0 1px;
}

.date {
    height: 58px;
    margin: 0 1px;
    padding-top: 3px;
    background: #000;
    color: #ff0;
    text-align: center;
    font-size: 20px;
    line-height: 26px;
    font-weight: bold;
}

.c-tx {
    width: 168px;
    margin-left: 6px;
    padding-top: 4px;
}

.c-tx label {
    height: 21px;
}

.c-tx .mode {
    display: block;
    width: 112px;
    margin: 6px 0 4px;
}

.c-tx div {
    display: flex;
    gap: 8px;
    margin-bottom: 4px;
}

.c-tx .spin {
    width: 112px;
    height: 21px;
}

.c-tx div .btn {
    width: 46px;
}

.wsjt .rep {
    gap: 12px;
    padding-left: 5px;
}

.c-tx .rep .spin {
    width: 54px;
}

.tabs {
    width: 18px;
    margin-left: 4px;
    display: grid;
    grid-template: 30px 30px / 1fr;
    place-items: center;
    align-content: start;
}

.tabs svg {
    width: 18px;
    height: 64px;
    grid-area: 1 / 1;
    align-self: start;
}

.tabs span {
    grid-column: 1;
    grid-row: 1;
    transform: rotate(-90deg);
}

.tabs span + span {
    grid-row: 2;
}

.c-msg {
    flex: 1;
    height: 221px;
    border: 1px solid #555;
    background: #fcfcfc;
    padding: 25px 3px 0;
}

.msg {
    display: grid;
    grid-template-columns: 1fr 1fr;
    gap: 4px 2px;
}

.msg .btn {
    margin: 0 1px;
}

.msg h4 {
    height: 30px;
    line-height: 31px;
    margin-bottom: -1px;
    text-align: center;
    background: #a2b5bf;
    font-size: 13px;
    font-weight: bold;
}

.c-msg .line {
    display: flex;
    gap: 7px;
    margin-top: 10px;
}

.c-msg .line select, .c-msg .line .box {
    width: 150px;
    height: 21px;
}

.c-msg .line label {
    gap: 7px;
}

.pink {
    padding-left: 5px;
    border: 2px solid #fdfdfd;
    outline: 1px solid #d0d4e0;
    background-image: url("data:image/svg+xml,%3Csvg xmlns='http://www.w3.org/2000/svg' width='8' height='5'%3E%3Cpath d='M0 0h8L4 5z'/%3E%3C/svg%3E"), linear-gradient(90deg, #f7c6f8 128px, #fdfdfd 128px);
}

.wsjt .pwr {
    width: 41px;
    flex-direction: column;
    gap: 7px;
    padding-top: 8px;
}

.pwr .vert {
    height: 186px;
    margin-right: 12px;
    background: linear-gradient(#999, #999) 7px 0 / 1px 100% no-repeat, linear-gradient(#bbb, #bbb) 9px 0 / 1px 100% no-repeat, repeating-linear-gradient(transparent 0 5px, #8a8a70 5px 6px) right 0 / 4px 100% no-repeat;
}

.status {
    display: flex;
    gap: 6px;
    height: 22px;
    padding: 1px 2px 2px;
}

.status span {
    width: 150px;
    line-height: 17px;
    text-align: center;
    border: 1px solid #fff;
    border-color: #999 #ccc #ccc #999;
}

.status .rx, .status .jt {
    width: 80px;
    background: #0f0;
}

.status .jt {
    background: #ff0;
}

/* ---- comfort ---- */

.comfort {
    left: 43px;
    top: 0;
    width: 48.75%;
    padding: 0 7px 6px;
    border: 1px solid #1ad;
    border-width: 0 1px 1px;
    background: linear-gradient(#8fb0d4, #b4cbe4 25px, #c9dbee 110px, #b4cde6 120px);
    font-family: "Liberation Sans", sans-serif;
    box-shadow: -1px 0 0 #111, 0 1px 0 #111;
}

.comfort header {
    height: 25px;
    padding: 4px 3px 0 1px;
    font-family: "Open Sans", sans-serif;
}

.comfort-body {
    background: #f0f0f0;
    padding-bottom: 4px;
}

.comfort .menu {
    gap: 13px;
    padding-left: 6px;
    font-family: "Open Sans", sans-serif;
    white-space: nowrap;
}

.scale {
    display: flex;
    justify-content: space-between;
    padding: 2px 14px 0 11px;
    height: 18px;
    font-weight: bold;
}

.scale span {
    width: 0;
    display: flex;
    justify-content: center;
}

.ruler {
    position: relative;
    height: 12px;
    margin: 0 10px 0 3px;
    border: 1px solid #000;
    background: linear-gradient(90deg, #000 3px, transparent 3px) 4px 0 / 37px 7px repeat-x, linear-gradient(90deg, #087070 3px, transparent 3px) 22px 7px / 37px 4px repeat-x, #fff;
}

.ruler i {
    position: absolute;
    left: 50%;
    width: 70px;
    height: 8px;
    border: 3px solid #f00;
    border-bottom: 0;
}

.calls {
    position: relative;
    height: 12px;
    margin: 0 10px 0 3px;
    background: #999;
    font-size: 13px;
    font-weight: bold;
    line-height: 14px;
    display: flex;
    gap: 200px;
    padding-left: 191px;
}

#fall {
    display: block;
    width: calc(100% - 13px);
    height: 180px;
    margin-left: 3px;
    border: solid #000;
    border-width: 0 2px 1px 1px;
    image-rendering: pixelated;
}

.cf {
    display: flex;
    justify-content: space-between;
    padding: 3px 6px 0 3px;
}

.cf-left {
    width: 549px;
}

.cf-head {
    display: flex;
    height: 22px;
    margin-left: 2px;
    border: solid #444;
    border-width: 1px 0 0 1px;
    padding-left: 14px;
    background: #fdfdfd;
    color: #777;
    font: bold 18px/22px "Liberation Mono", monospace;
}

.cf-head span:nth-child(1) {
    width: 44px;
}

.cf-head span:nth-child(2) {
    width: 55px;
}

.cf-head span:nth-child(3) {
    width: 44px;
}

.cf-head span:nth-child(4) {
    width: 66px;
}

.cf-head span:nth-child(5) {
    width: 110px;
}

.cf-head span:nth-child(6) {
    width: 176px;
}

.cf-list {
    display: flex;
    height: 178px;
    overflow: hidden;
    margin: 4px 0 5px 2px;
    border: solid #444;
    border-width: 1px 0 0 1px;
}

.cf-list table {
    flex: 1;
    min-width: 0;
    width: 100%;
    align-self: flex-start;
    background: #c3c3c3;
    table-layout: fixed;
    font: bold 18px "Liberation Mono", monospace;
}

.cf-list td {
    height: 26px;
    line-height: 22px;
    vertical-align: top;
    width: 55px;
    text-align: right;
}

.cf-list td:first-child {
    text-align: left;
    padding-left: 1px;
}

.cf-list td:nth-child(2), .cf-list td:nth-child(6) {
    width: 33px;
}

.cf-list td:nth-child(3) {
    width: 44px;
}

.cf-list td:nth-child(5) {
    width: 66px;
}

.cf-list td:last-child {
    width: auto;
    text-align: left;
    padding-left: 12px;
}

.cf-list .green {
    background: #0f0;
}

.cf-list .sel {
    outline: 1px dotted #222;
    outline-offset: -1px;
}

.cf-list .thumb {
    height: 52px;
}

.cf-keys {
    display: flex;
    align-items: center;
    gap: 3px;
    font-size: 13px;
    font-weight: bold;
}

.cf-keys button, .cf-tx button {
    height: 24px;
    flex: none;
    border: 1px solid #fff;
    border-right: 2px solid #555;
    border-bottom: 2px solid #555;
    background: #f0f0f0;
    padding: 0;
    box-shadow: inset 1px 1px 0 #d0d0d0;
    white-space: nowrap;
}

.cf-keys button:nth-child(1), .cf-keys button:nth-child(6) {
    width: 34px;
}

.cf-keys button:nth-child(2) {
    width: 77px;
}

.cf-keys button:nth-child(3) {
    width: 97px;
}

.cf-keys button:nth-child(4) {
    width: 53px;
}

.cf-keys button:nth-child(5) {
    width: 48px;
}

.cf-keys label {
    gap: 2px;
    font-size: 12px;
    font-weight: normal;
}

.cf-keys .free {
    flex: 1;
    min-width: 0;
    height: 23px;
    border: solid #555;
    border-width: 1px 0 0 1px;
    background: #fff;
}

.cf-right {
    width: 200px;
}

.cf-right h3 {
    height: 19px;
    padding-left: 25px;
    text-align: center;
    font-size: 16px;
    font-weight: bold;
    line-height: 17px;
    color: #006a00;
}

.cf-tx {
    display: flex;
    justify-content: space-between;
    margin-bottom: 7px;
}

.cf-tx button {
    width: 94px;
    height: 18px;
    border-bottom: 0;
    font-size: 13px;
    line-height: 14px;
    font-weight: bold;
    color: #a0a0a0;
}

.cf-tx button + button {
    width: 79px;
}

.cf-min {
    display: flex;
    height: 25px;
    gap: 28px;
    padding-left: 15px;
    border: 1px solid #999;
    font-size: 13px;
    font-weight: bold;
}

.cf-min label {
    gap: 6px;
}

.cf-min input[type="radio"]:checked {
    background: radial-gradient(#000 2px, #fff 3px);
}

.cf-min .ev {
    color: #f00;
}

.cf-df {
    display: flex;
    margin-top: 4px;
}

.cf-df input {
    width: 129px;
    height: 28px;
    border: solid #444;
    border-width: 1px 0 0 1px;
    background: #fff;
    color: #f00;
    text-align: center;
    font-size: 20px;
    font-weight: bold;
}

.cf-df dl {
    display: grid;
    grid-template-columns: 43px 14px;
    padding-left: 5px;
    font-size: 11px;
    line-height: 15px;
}

.cf-df dd {
    font-weight: bold;
}

.cf-clock {
    display: flex;
    align-items: flex-start;
    justify-content: space-between;
    height: 31px;
    padding-left: 22px;
    font-size: 11px;
}

.cf-clock time {
    font-size: 21px;
    font-weight: bold;
    line-height: 22px;
}

.cf-clock label {
    gap: 4px;
    align-self: center;
}

.cf-clock input {
    width: 34px;
    height: 22px;
    padding-left: 2px;
    border: solid #444;
    border-width: 1px 0 0 1px;
    font-size: 14px;
    background: #fff url("data:image/svg+xml,%3Csvg xmlns='http://www.w3.org/2000/svg' width='16' height='20'%3E%3Cpath d='M0 0h16v20H0z' fill='%23f0f0f0'/%3E%3Cpath d='M15.500 0v20M0 9.500h16M0 19.500h16' stroke='%23555'/%3E%3Cpath d='M6 6h4L8 4zM6 14h4l-2 2z'/%3E%3C/svg%3E") right center no-repeat;
}

.cf-zero {
    height: 24px;
    padding-left: 64px;
    line-height: 23px;
    text-align: center;
    font-size: 14px;
    background: #c0c0c0;
}

.cf-gray {
    height: 70px;
    margin-top: 3px;
    border: 1px solid #fff;
    border-top-color: #555;
    border-left-color: #555;
    background: #c0c0c0;
}

/* ---- teamviewer tab + taskbar ---- */

.tv {
    position: absolute;
    right: 0;
    top: 766px;
    width: 24px;
    height: 51px;
    padding: 4px 0 0 4px;
    background: #f4f4f4;
    border-radius: 3px 0 0 0;
    clip-path: polygon(0 0, 100% 0, 100% 100%, 0 75%);
}

.tv svg {
    width: 18px;
    height: 21px;
}

.taskbar {
    flex: none;
    position: relative;
    height: 31px;
    display: flex;
    align-items: center;
    border-top: 1px solid #ddd;
    background: linear-gradient(#8a8f8d, #4a4f4d 48%, #151917 52%, #1a1e1c);
    color: #fff;
}

.start {
    width: 62px;
    height: 36px;
    padding-left: 9px;
    border: 0;
    background: none;
    text-align: left;
}

.start svg {
    width: 42px;
    height: 42px;
    margin-top: -2px;
}

.quick {
    display: flex;
    align-items: center;
    gap: 7px;
    width: 100px;
    padding-left: 3px;
}

.quick svg {
    width: 16px;
    height: 14px;
}

.quick span {
    margin: -12px 0 0 11px;
    font-size: 16px;
}

.tasks {
    display: flex;
    gap: 3px;
    flex: 1;
}

.tasks button {
    width: 157px;
    height: 26px;
    padding: 0 0 0 8px;
    display: flex;
    align-items: center;
    gap: 4px;
    white-space: nowrap;
    overflow: hidden;
    border: 1px solid #8a8f8d;
    border-radius: 3px;
    background: linear-gradient(#7d8280, #4e5452 48%, #202523 52%, #343937);
}

.tasks svg {
    width: 16px;
    height: 16px;
    flex: none;
}

.tasks .active {
    background: linear-gradient(#3a3f3d, #1a1e1c 48%, #060807);
}

.tray {
    display: flex;
    align-items: center;
    gap: 2px;
    padding-right: 12px;
}

.tray svg {
    width: 17px;
    height: 16px;
}

.tray .lt {
    width: 8px;
    margin: 0 5px 0 10px;
}

.tray .net {
    margin-left: 8px;
}

.tray span {
    padding-right: 4px;
}

.tray time {
    padding-left: 3px;
}
```
